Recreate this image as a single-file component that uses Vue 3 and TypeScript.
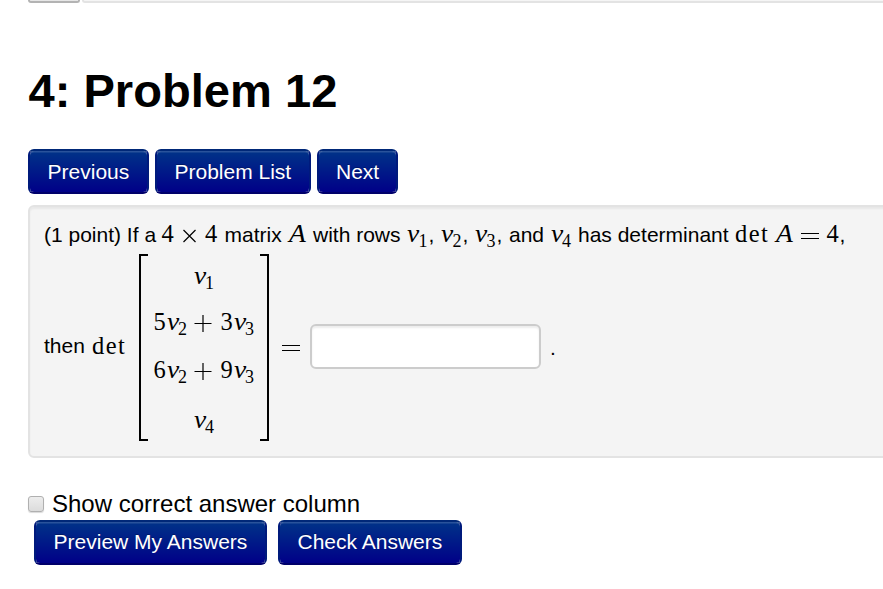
<script setup lang="ts">
import { ref } from 'vue'

type Kind = 'text' | 'num' | 'fn' | 'op' | 'big' | 'var'
interface Piece {
  kind: Kind
  value: string
  sub?: string
  width: number
}

const navigation = ['Previous', 'Problem List', 'Next']
const actions = ['Preview My Answers', 'Check Answers']
const answer = ref('')
const showCorrect = ref(false)

const statement: Piece[] = [
  { kind: 'text', value: '(1 point) If a', width: 117.5 },
  { kind: 'num', value: '4', width: 20.5 },
  { kind: 'op', value: '×', width: 23 },
  { kind: 'num', value: '4', width: 19.5 },
  { kind: 'text', value: 'matrix', width: 64 },
  { kind: 'big', value: 'A', width: 24.5 },
  { kind: 'text', value: 'with rows', width: 94 },
  { kind: 'var', value: 'v', sub: '1', width: 21.5 },
  { kind: 'text', value: ',', width: 12.5 },
  { kind: 'var', value: 'v', sub: '2', width: 21.5 },
  { kind: 'text', value: ',', width: 12.5 },
  { kind: 'var', value: 'v', sub: '3', width: 21.5 },
  { kind: 'text', value: ',', width: 12.5 },
  { kind: 'text', value: 'and', width: 41.5 },
  { kind: 'var', value: 'v', sub: '4', width: 27.5 },
  { kind: 'text', value: 'has determinant', width: 157 },
  { kind: 'fn', value: 'det', width: 41 },
  { kind: 'big', value: 'A', width: 25 },
  { kind: 'op', value: '=', width: 25.5 },
  { kind: 'num', value: '4', width: 13 },
  { kind: 'text', value: ',', width: 8 },
]

const combo = (a: string, b: string): Piece[] => [
  { kind: 'num', value: a, width: 13 },
  { kind: 'var', value: 'v', sub: '2', width: 27.5 },
  { kind: 'op', value: '+', width: 26.5 },
  { kind: 'num', value: b, width: 13 },
  { kind: 'var', value: 'v', sub: '3', width: 21 },
]

const rows: Piece[][] = [
  [{ kind: 'var', value: 'v', sub: '1', width: 21 }],
  combo('5', '3'),
  combo('6', '9'),
  [{ kind: 'var', value: 'v', sub: '4', width: 21 }],
]
</script>

<template>
  <main class="page">
    <div class="crumbs"><span class="crumb-toggle"></span><span class="crumb-bar"></span></div>
    <h1>4: Problem 12</h1>
    <nav class="nav">
      <button v-for="label in navigation" :key="label" class="btn" type="button">{{ label }}</button>
    </nav>

    <section class="problem">
      <p class="math-line">
        <span v-for="(p, i) in statement" :key="i" class="piece" :class="p.kind" :style="{ width: p.width + 'px' }"
          ><svg v-if="p.kind === 'op'" class="sign" viewBox="0 0 18 18">
            <path v-if="p.value === '×'" d="M1.5 3L13.5 15M13.5 3L1.5 15" />
            <path v-else d="M0 6.5H18M0 11.5H18" /></svg
          ><template v-else><span class="glyph">{{ p.value }}</span><span v-if="p.sub" class="sub">{{ p.sub }}</span></template></span>
      </p>
      <div class="equation">
        <span class="then">then</span>
        <span class="fn det">det</span>
        <div class="matrix">
          <div v-for="(row, r) in rows" :key="r" class="math-line matrix-row">
            <span v-for="(p, i) in row" :key="i" class="piece" :class="p.kind" :style="{ width: p.width + 'px' }"
              ><svg v-if="p.kind === 'op'" class="sign" viewBox="0 0 18 18"><path d="M0.5 8.5H17.5M9 0V17" /></svg
              ><template v-else><span class="glyph">{{ p.value }}</span><span v-if="p.sub" class="sub">{{ p.sub }}</span></template></span>
          </div>
        </div>
        <svg class="sign equals" viewBox="0 0 18 18"><path d="M0 6.5H18M0 11.5H18" /></svg>
        <input v-model="answer" class="answer" type="text" />
        <span class="stop">.</span>
      </div>
    </section>

    <label class="option">
      <input v-model="showCorrect" type="checkbox" class="check" />
      <span>Show correct answer column</span>
    </label>
    <div class="actions">
      <button v-for="label in actions" :key="label" class="btn" type="button">{{ label }}</button>
    </div>
  </main>
</template>

<style>
body {
  margin: 0;
  background: #fff;
  overflow: hidden;
}
</style>

<style scoped>
.page {
  box-sizing: border-box;
  height: 589px;
  padding-left: 28px;
  overflow: hidden;
  color: #000;
  font-family: "Liberation Sans", Arial, sans-serif;
  font-size: 21px;
}
.crumbs {
  display: flex;
  gap: 2px;
  height: 3px;
}
.crumb-toggle,
.crumb-bar {
  box-sizing: border-box;
  width: 52px;
  border: 2px solid #b3b3b3;
  border-top: 0;
  border-radius: 0 0 6px 6px;
  background: #e6e6e6;
}
.crumb-bar {
  flex: 1;
  border-color: #e3e3e3;
  border-right: 0;
  border-radius: 0 0 0 6px;
  background: #f5f5f5;
}
h1 {
  margin: 58px 0 0;
  height: 88px;
  padding-left: 0.5px;
  font-size: 47.1px;
  line-height: 60px;
  font-weight: 700;
  white-space: nowrap;
}
.nav {
  display: flex;
  gap: 6px;
}
.btn {
  box-sizing: border-box;
  height: 45px;
  padding: 0 17.6px;
  border: 2px solid;
  border-color: #002878 #001a7c #00006a;
  border-radius: 6px;
  background: linear-gradient(#003388, #000088) padding-box;
  box-shadow: inset 0 1.5px 0 rgba(255, 255, 255, 0.16);
  color: #fff;
  font-family: inherit;
  font-size: 21px;
  line-height: 41px;
  text-shadow: 0 -1px 0 rgba(0, 0, 0, 0.25);
  white-space: nowrap;
}
.nav .btn:last-child {
  padding: 0 17.2px;
}
.problem {
  box-sizing: border-box;
  width: 900px;
  height: 253px;
  margin-top: 11px;
  padding: 10px 0 0 14px;
  border: 2px solid #e3e3e3;
  border-radius: 6px;
  background: #f4f4f4;
  box-shadow: inset 0 2px 2px rgba(0, 0, 0, 0.05);
}
.math-line {
  display: flex;
  align-items: baseline;
  height: 34px;
  margin: 0;
  line-height: 34px;
  white-space: nowrap;
}
.piece {
  flex: none;
}
.num,
.fn,
.big,
.var {
  font-family: "Liberation Serif", "Times New Roman", serif;
  font-size: 25px;
}
.num {
  font-size: 24.5px;
}
.fn {
  font-size: 24.5px;
  letter-spacing: 1.5px;
}
.big,
.var {
  font-style: italic;
}
.big .glyph,
.var .glyph {
  display: inline-block;
  transform: scaleX(1.1);
  transform-origin: left;
}
.var .glyph {
  width: 11.5px;
}
.sub {
  font-size: 18px;
  font-style: normal;
  line-height: 1;
  vertical-align: -4.5px;
}
.sign {
  width: 18px;
  height: 18px;
  vertical-align: -3px;
  fill: none;
  stroke: #000;
  stroke-width: 1.2;
}
.equation {
  display: flex;
  align-items: center;
  height: 187px;
  margin-top: 3px;
}
.then,
.det {
  width: 48px;
  height: 34px;
  margin-bottom: 3px;
  line-height: 34px;
}
.det {
  width: 47px;
  margin-bottom: 4px;
}
.matrix {
  position: relative;
  box-sizing: border-box;
  display: flex;
  flex-direction: column;
  align-items: center;
  gap: 14px;
  width: 130px;
  height: 187px;
  padding-top: 3px;
}
.matrix-row:first-child {
  margin: 2px 0 -2px;
}
.matrix-row:last-child {
  margin-top: 2px;
}
.matrix::before,
.matrix::after {
  content: "";
  position: absolute;
  top: 0;
  bottom: 0;
  left: 0;
  width: 7px;
  border: 2px solid #000;
  border-right: 0;
}
.matrix::after {
  right: 0;
  left: auto;
  border-right: 2px solid #000;
  border-left: 0;
}
.equals {
  margin: 0 10px 0 13px;
}
.answer {
  box-sizing: border-box;
  width: 231px;
  height: 45px;
  margin: 0 0 2px;
  border: 2px solid #ccc;
  border-radius: 6px;
  background: #fff;
  box-shadow: inset 0 2px 2px rgba(0, 0, 0, 0.075);
}
.stop {
  margin-left: 9px;
}
.option {
  display: flex;
  align-items: center;
  height: 30px;
  margin: 31px 0 1px;
  font-size: 24px;
  white-space: nowrap;
}
.check {
  appearance: none;
  box-sizing: border-box;
  width: 16px;
  height: 16px;
  margin: 0 8px 0 0;
  border: 1.5px solid #b0b0b0;
  border-radius: 3px;
  background: linear-gradient(#ededed, #dcdcdc);
  box-shadow: 0 1px 1px rgba(0, 0, 0, 0.15);
}
.actions {
  display: flex;
  gap: 11px;
  padding-left: 6px;
}
.actions .btn {
  padding-bottom: 2px;
  line-height: 39px;
}
</style>
